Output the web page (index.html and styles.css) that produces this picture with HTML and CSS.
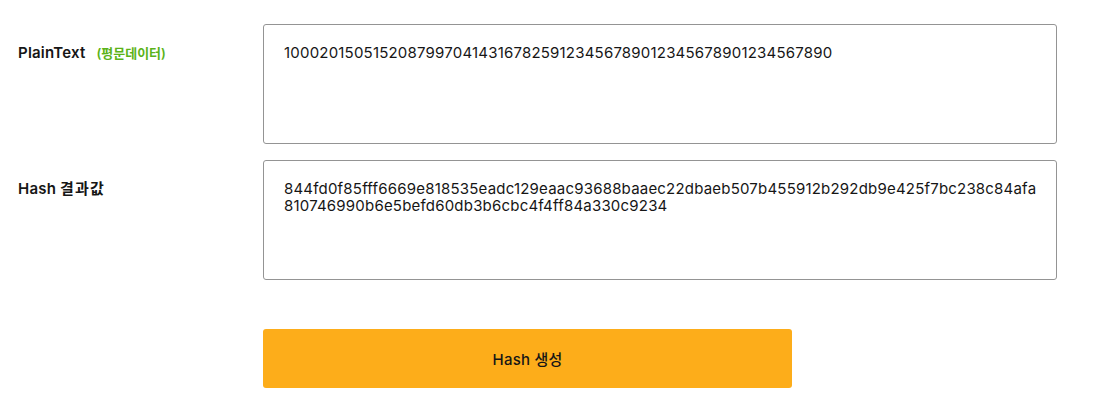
FILE: index.html
```html
<!DOCTYPE html>
<html lang="ko">
<head>
<meta charset="utf-8">
<title>Hash</title>
<link rel="stylesheet" href="styles.css">
</head>
<body>
<div class="page">
  <div class="row">
    <label class="label" for="plain">PlainText <span class="sub">(평문데이터)</span></label>
    <textarea id="plain" class="field">1000201505152087997041431678259123456789012345678901234567890</textarea>
  </div>
  <div class="row">
    <label class="label" for="hash">Hash <span class="ko">결과값</span></label>
    <textarea id="hash" class="field">844fd0f85fff6669e818535eadc129eaac93688baaec22dbaeb507b455912b292db9e425f7bc238c84afa810746990b6e5befd60db3b6cbc4f4ff84a330c9234</textarea>
  </div>
  <div class="actions">
    <button class="btn" type="button">Hash 생성</button>
  </div>
</div>
</body>
</html>
```
FILE: styles.css
```css
html, body {
  margin: 0;
  padding: 0;
  background: #fff;
}
body {
  font-family: Inter, "Noto Sans CJK KR", sans-serif;
  color: #161616;
}
.page {
  padding: 24px 0 0 18px;
  display: flex;
  flex-direction: column;
  gap: 16px;
}
.row {
  display: grid;
  grid-template-columns: 245px 794px;
  align-items: start;
}
.label {
  font-size: 15px;
  font-weight: 600;
  padding-top: 20px;
  line-height: 17px;
  color: #161616;
  letter-spacing: 0.2px;
}
.ko {
  letter-spacing: 1.2px;
}
.sub {
  font-size: 13px;
  color: #5bb318;
  margin-left: 7px;
  letter-spacing: 0;
}
.field {
  box-sizing: border-box;
  width: 794px;
  height: 120px;
  margin: 0;
  padding: 19px 15px 19px 20px;
  border: 1px solid #949494;
  border-radius: 3px;
  font-family: Inter, "Noto Sans CJK KR", sans-serif;
  font-size: 15px;
  letter-spacing: 0.2px;
  line-height: 17px;
  color: #161616;
  resize: none;
  outline: none;
  overflow: hidden;
}
.actions {
  padding: 33px 0 0 245px;
}
.btn {
  width: 529px;
  height: 59px;
  border: none;
  border-radius: 3px;
  background: #fdad1a;
  font-family: Inter, "Noto Sans CJK KR", sans-serif;
  font-size: 15px;
  font-weight: 500;
  letter-spacing: 0.2px;
  color: #161616;
  cursor: pointer;
}
```
